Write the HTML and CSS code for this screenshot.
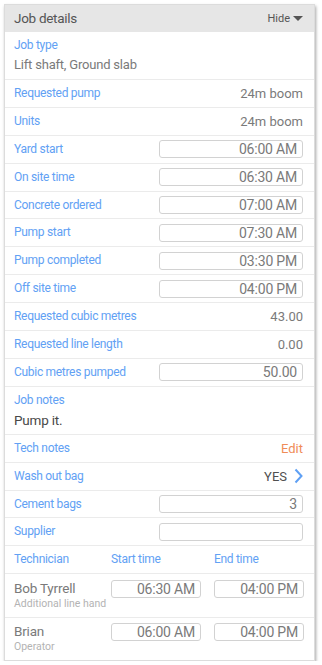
FILE: index.html
```html
<!DOCTYPE html>
<html>
<head>
<meta charset="utf-8">
<link rel="stylesheet" href="styles.css">
</head>
<body>
<div class="panel">
  <div class="head">
    <span class="title">Job details</span>
    <span class="hide">Hide <span class="tri"></span></span>
  </div>
  <div class="block">
    <div class="label">Job type</div>
    <div class="val">Lift shaft, Ground slab</div>
  </div>
  <div class="row"><span class="label">Requested pump</span><span class="val">24m boom</span></div>
  <div class="row"><span class="label">Units</span><span class="val">24m boom</span></div>
  <div class="row"><span class="label">Yard start</span><span class="inp">06:00 AM</span></div>
  <div class="row"><span class="label">On site time</span><span class="inp">06:30 AM</span></div>
  <div class="row"><span class="label">Concrete ordered</span><span class="inp">07:00 AM</span></div>
  <div class="row"><span class="label">Pump start</span><span class="inp">07:30 AM</span></div>
  <div class="row"><span class="label">Pump completed</span><span class="inp">03:30 PM</span></div>
  <div class="row"><span class="label">Off site time</span><span class="inp">04:00 PM</span></div>
  <div class="row"><span class="label">Requested cubic metres</span><span class="val">43.00</span></div>
  <div class="row"><span class="label">Requested line length</span><span class="val">0.00</span></div>
  <div class="row"><span class="label">Cubic metres pumped</span><span class="inp">50.00</span></div>
  <div class="block">
    <div class="label">Job notes</div>
    <div class="val dark">Pump it.</div>
  </div>
  <div class="row"><span class="label">Tech notes</span><span class="edit">Edit</span></div>
  <div class="row"><span class="label">Wash out bag</span><span class="yes">YES <svg class="chev" width="9" height="16" viewBox="0 0 9 16"><path d="M1.5 1.5 L7.5 8 L1.5 14.5" fill="none" stroke="#5fa0f4" stroke-width="2"/></svg></span></div>
  <div class="row"><span class="label">Cement bags</span><span class="inp">3</span></div>
  <div class="row"><span class="label">Supplier</span><span class="inp"></span></div>
  <div class="grid ghead">
    <span class="label">Technician</span><span class="label">Start time</span><span class="label">End time</span>
  </div>
  <div class="grid tech">
    <div><div class="name">Bob Tyrrell</div><div class="role">Additional line hand</div></div>
    <span class="inp">06:30 AM</span><span class="inp">04:00 PM</span>
  </div>
  <div class="grid tech last">
    <div><div class="name">Brian</div><div class="role">Operator</div></div>
    <span class="inp">06:00 AM</span><span class="inp">04:00 PM</span>
  </div>
</div>
</body>
</html>
```
FILE: styles.css
```css
html, body { margin: 0; padding: 0; background: #fff; }
body { font-family: Roboto, "Noto Sans", sans-serif; font-size: 12px; line-height: 15px; color: #7a7a7a; }
.panel {
  margin: 4px 7px 0 4px;
  width: 309px;
  border: 1px solid #dcdcdc;
  box-shadow: 1px 2px 3px rgba(0,0,0,0.35);
  background: #fff;
}
.head {
  height: 27px;
  background: #e6e6e6;
  display: flex; align-items: center; justify-content: space-between;
  padding: 0 11px 0 9px;
}
.title { font-size: 13.5px; letter-spacing: -0.3px; color: #555; }
.hide { font-size: 11px; color: #555; display: flex; align-items: center; gap: 3px; }
.tri { width: 0; height: 0; border-left: 5px solid transparent; border-right: 5px solid transparent; border-top: 5px solid #555; }
.label { color: #62a1f4; letter-spacing: -0.3px; }
.block { padding: 6px 11px 6px 9px; border-bottom: 1px solid #ebebeb; }
.block .label { line-height: 15px; }
.block .val { margin-top: 4px; font-size: 13px; line-height: 16px; letter-spacing: -0.2px; }
.block .val.dark { color: #484848; font-size: 13.5px; }
.row {
  height: 26.9px; display: flex; align-items: center; justify-content: space-between;
  padding: 0 11px 0 9px; border-bottom: 1px solid #ebebeb;
}
.row .val { font-size: 13px; }
.inp {
  box-sizing: border-box; width: 144px; height: 18px;
  border: 1px solid #d2d2d2; border-radius: 3px;
  text-align: right; padding: 0 5px; font-size: 14px; line-height: 16px; color: #7a7a7a;
  letter-spacing: -0.2px;
}
.edit { color: #f08c58; font-size: 13px; }
.yes { color: #505050; font-size: 13px; display: flex; align-items: center; gap: 7px; }
.chev { display: block; }
.grid {
  display: grid; grid-template-columns: 84px 90px 90px; column-gap: 13px;
  padding: 0 11px 0 9px; border-bottom: 1px solid #ebebeb;
}
.ghead { height: 26.9px; align-items: center; }
.tech { padding-top: 6px; height: 37px; align-items: start; }
.tech.last { border-bottom: none; padding-top: 5px; height: 37px; }
.tech .inp { width: 90px; }
.name { font-size: 13.5px; line-height: 16px; letter-spacing: -0.2px; color: #7a7a7a; white-space: nowrap; }
.role { font-size: 10.5px; line-height: 12px; color: #b3b3b3; margin-top: 2px; white-space: nowrap; }
```
